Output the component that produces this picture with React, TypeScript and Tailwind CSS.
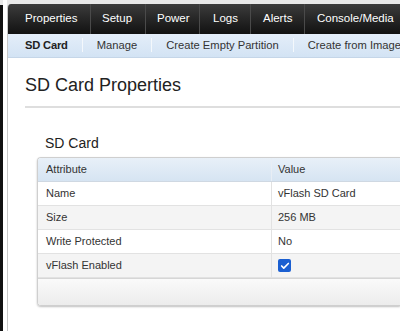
import { Check } from "lucide-react";

const tabs = [
  { label: "Properties", w: "w-[83px] pl-[17px]" },
  { label: "Setup", w: "w-[55px] pl-[11px]" },
  { label: "Power", w: "w-[54px] pl-[11px]" },
  { label: "Logs", w: "w-[51px] pl-[13px]" },
  { label: "Alerts", w: "w-[54px] pl-[12px]" },
  { label: "Console/Media", w: "flex-1 pl-[12px]" },
];

const subTabs = ["SD Card", "Manage", "Create Empty Partition", "Create from Image"];

const rows = [
  { attr: "Name", value: "vFlash SD Card" },
  { attr: "Size", value: "256 MB" },
  { attr: "Write Protected", value: "No" },
  { attr: "vFlash Enabled", value: "check" },
];

const App = () => {
  return (
    <div
      className="w-[400px] h-[331px] overflow-hidden bg-[#e9e9e9] flex"
      style={{ fontFamily: '"Liberation Sans", Arial, sans-serif' }}
    >
      <div className="w-[3px] mt-[5px] bg-[#111]" />
      <div className="w-[4px] bg-white" />
      <div className="flex-1 flex flex-col mt-[4px] bg-white border-l border-[#c8c8c8] rounded-tl-[4px] overflow-hidden">
        <div className="h-[30px] flex bg-gradient-to-b from-[#3c3c3c] to-[#121212] shrink-0">
          {tabs.map((t, i) => (
            <div
              key={t.label}
              className={`h-full flex items-center text-[11.5px] text-white whitespace-nowrap shrink-0 ${t.w} ${
                i < tabs.length - 1 ? "border-r border-[#4a4a4a]" : ""
              }`}
            >
              {t.label}
            </div>
          ))}
        </div>
        <div className="h-[24px] flex items-center bg-gradient-to-b from-[#e4eef9] to-[#d3e3f4] border-b border-[#c5d6e8] shrink-0">
          {subTabs.map((t, i) => (
            <div key={t} className="flex items-center whitespace-nowrap">
              <span
                className={`text-[11.2px] ${i === 0 ? "pl-[17px] font-bold text-[#222] tracking-[-0.2px]" : "text-[#333]"}`}
              >
                {t}
              </span>
              {i < subTabs.length - 1 && (
                <span className="mx-[14px] w-px h-[14px] bg-[#f4f8fc]" />
              )}
            </div>
          ))}
        </div>
        <div className="pl-[17px]">
          <h1 className="text-[18px] text-[#222] mt-[15px] leading-[24px]">SD Card Properties</h1>
          <div className="mt-[9px] h-[2px] bg-[#dedede]" />
          <h2 className="text-[14px] text-[#222] mt-[27px] ml-[20px] leading-[16px]">SD Card</h2>
          <div className="mt-[6px] ml-[12px] border border-[#cfcfcf] border-r-0 rounded-l-[4px] overflow-hidden shadow-[0_1px_2px_rgba(0,0,0,0.25)]">
            <div className="flex h-[24px] bg-gradient-to-b from-[#e8f0f8] to-[#d6e4f2] border-b border-[#cfd8e2] text-[11px] text-[#333]">
              <div className="w-[234px] flex items-center pl-[8px] border-r border-[#e8eef5]">Attribute</div>
              <div className="flex-1 flex items-center pl-[6px]">Value</div>
            </div>
            {rows.map((r, i) => (
              <div
                key={r.attr}
                className={`flex h-[24px] text-[11px] text-[#333] border-b border-[#e2e2e2] ${
                  i % 2 === 1 ? "bg-[#f4f4f4]" : "bg-white"
                }`}
              >
                <div className="w-[234px] flex items-center pl-[8px] border-r border-[#e2e2e2]">{r.attr}</div>
                <div className="flex-1 flex items-center pl-[6px]">
                  {r.value === "check" ? (
                    <span className="w-[13px] h-[13px] rounded-[2px] bg-[#1b5fd1] flex items-center justify-center">
                      <Check className="w-[10px] h-[10px] text-white" strokeWidth={4} />
                    </span>
                  ) : (
                    r.value
                  )}
                </div>
              </div>
            ))}
            <div className="h-[27px] bg-gradient-to-b from-[#fafafa] to-[#ececec] border-t border-[#d6d6d6]" />
          </div>
        </div>
      </div>
    </div>
  );
};

export default App;
